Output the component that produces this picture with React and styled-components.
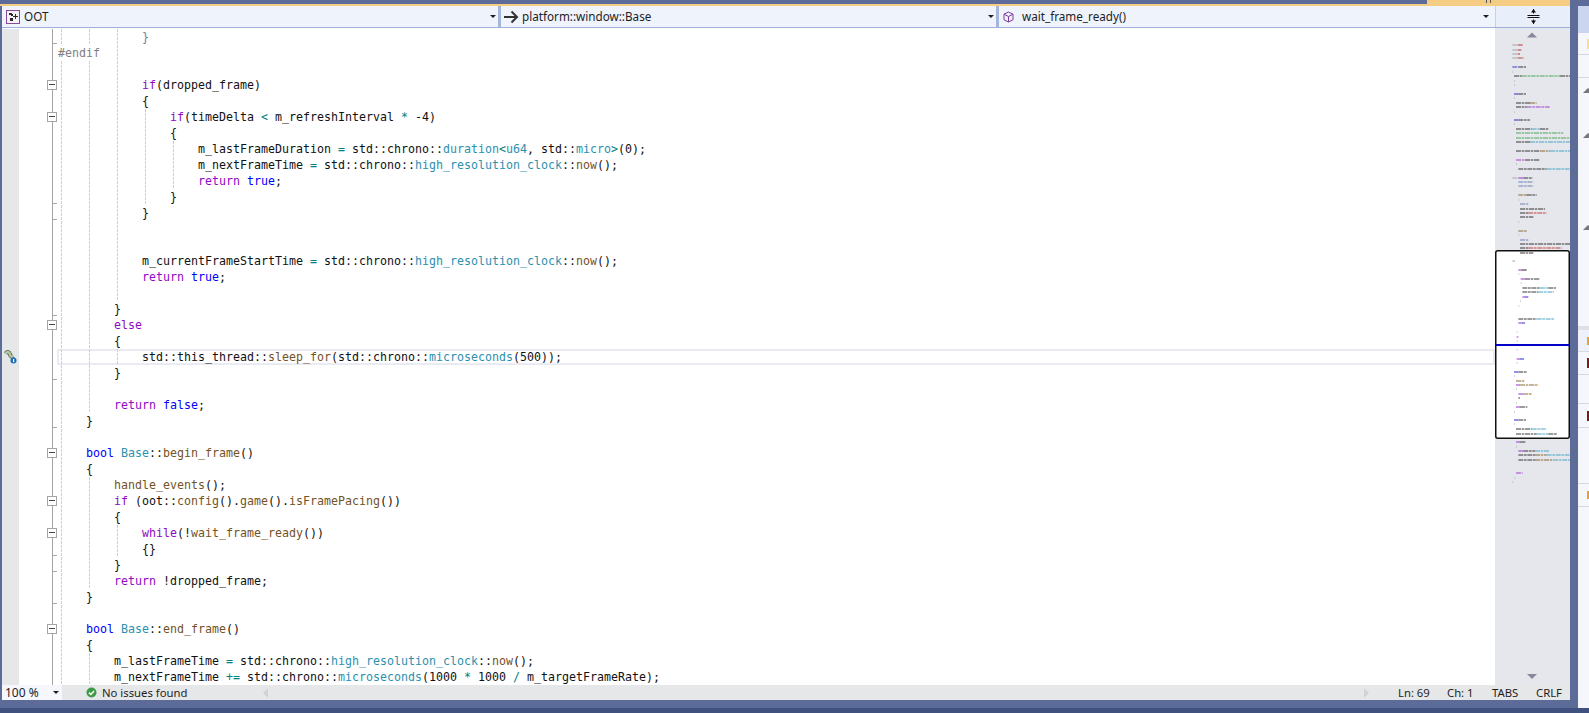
import styled, { createGlobalStyle } from "styled-components";

const GlobalStyle = createGlobalStyle`
  html, body {
    margin: 0;
    padding: 0;
    background: #5d6b99;
    overflow: hidden;
  }
`;

const uiFont = `"Noto Sans", "Open Sans", sans-serif`;

const tokenColors = {
  k: "#0000ff", // keyword
  c: "#8f08c4", // control flow
  f: "#74531f", // function
  t: "#2b91af", // type
  o: "#008080", // operator
  p: "#808080", // preprocessor
  g: "#6d8296", // inactive code
};

// [col, text, guide levels, fold?, closes outline?]
const codeLines = [
  [12, "[g|}]", [0, 1, 2], false, true],
  [0, "[p|#endif]", [2]],
  [0, "", [0, 1, 2]],
  [12, "[c|if](dropped_frame)", [0, 1, 2], true],
  [12, "{", [0, 1, 2]],
  [16, "[c|if](timeDelta [o|<] m_refreshInterval [o|*] -4)", [0, 1, 2, 3], true],
  [16, "{", [0, 1, 2, 3]],
  [20, "m_lastFrameDuration [o|=] std::chrono::[t|duration][o|<][t|u64], std::[t|micro][o|>](0);", [0, 1, 2, 3, 4]],
  [20, "m_nextFrameTime [o|=] std::chrono::[t|high_resolution_clock]::[f|now]();", [0, 1, 2, 3, 4]],
  [20, "[c|return] [k|true];", [0, 1, 2, 3, 4]],
  [16, "}", [0, 1, 2, 3], false, true],
  [12, "}", [0, 1, 2], false, true],
  [0, "", [0, 1, 2]],
  [0, "", [0, 1, 2]],
  [12, "m_currentFrameStartTime [o|=] std::chrono::[t|high_resolution_clock]::[f|now]();", [0, 1, 2]],
  [12, "[c|return] [k|true];", [0, 1, 2]],
  [0, "", [0, 1, 2]],
  [8, "}", [0, 1], false, true],
  [8, "[c|else]", [0, 1], true],
  [8, "{", [0, 1]],
  [12, "std::this_thread::[f|sleep_for](std::chrono::[t|microseconds](500));", [0, 1, 2]],
  [8, "}", [0, 1], false, true],
  [0, "", [0, 1]],
  [8, "[c|return] [k|false];", [0, 1]],
  [4, "}", [0], false, true],
  [0, "", [0]],
  [4, "[k|bool] [t|Base]::[f|begin_frame]()", [0], true],
  [4, "{", [0]],
  [8, "[f|handle_events]();", [0, 1]],
  [8, "[c|if] (oot::[f|config]().[f|game]().[f|isFramePacing]())", [0, 1], true],
  [8, "{", [0, 1]],
  [12, "[c|while](![f|wait_frame_ready]())", [0, 1, 2], true],
  [12, "{}", [0, 1, 2], false, true],
  [8, "}", [0, 1], false, true],
  [8, "[c|return] !dropped_frame;", [0, 1]],
  [4, "}", [0], false, true],
  [0, "", [0]],
  [4, "[k|bool] [t|Base]::[f|end_frame]()", [0], true],
  [4, "{", [0]],
  [8, "m_lastFrameTime [o|=] std::chrono::[t|high_resolution_clock]::[f|now]();", [0, 1]],
  [8, "m_nextFrameTime [o|+=] std::chrono::[t|microseconds](1000 [o|*] 1000 [o|/] m_targetFrameRate);", [0, 1]],
];

const dk = "#333";
const gy = "#a8a8a8";
const bl = "#3a3ad8";
const gr = "#4fa858";
const rd = "#c04040";
const pu = "#a040d0";
const te = "#45a5c5";
const br = "#8a6a30";
const sl = "#7080b0";

// y, then runs of [x0, x1, colour], x read off the zoomed crop
const minimap = [
  [45, [97, 112, gy], [113, 130, rd]],
  [50, [97, 112, gy], [113, 124, rd]],
  [54, [97, 112, gy], [113, 120, rd]],
  [58, [97, 112, gy], [113, 132, rd]],
  [67, [97, 115, bl], [115, 138, dk]],
  [72, [97, 100, gy]],
  [76, [102, 125, dk], [125, 240, gr], [240, 270, dk]],
  [81, [102, 105, gy]],
  [85, [102, 105, gy]],
  [94, [102, 115, bl], [115, 138, dk]],
  [98, [102, 105, gy]],
  [103, [108, 150, dk], [150, 170, br]],
  [107, [108, 140, dk], [140, 210, pu]],
  [112, [102, 105, gy]],
  [120, [102, 115, bl], [115, 150, dk]],
  [124, [102, 105, gy]],
  [129, [108, 155, dk], [155, 180, te], [180, 205, dk]],
  [133, [108, 250, gr]],
  [138, [108, 270, gr]],
  [142, [108, 150, dk], [150, 270, te]],
  [151, [108, 180, dk], [180, 210, br], [210, 270, te]],
  [160, [108, 135, pu], [135, 180, dk]],
  [164, [108, 111, gy]],
  [169, [115, 200, dk], [200, 270, te]],
  [178, [97, 115, gy], [115, 130, pu], [130, 158, dk]],
  [182, [115, 160, sl]],
  [186, [115, 160, sl]],
  [195, [115, 140, br], [140, 170, dk]],
  [200, [115, 118, gy]],
  [204, [120, 145, sl]],
  [209, [120, 195, dk]],
  [213, [120, 145, dk], [145, 200, rd]],
  [217, [120, 160, dk]],
  [222, [115, 118, gy]],
  [231, [115, 140, br]],
  [235, [115, 118, gy]],
  [240, [120, 145, sl]],
  [244, [120, 270, dk]],
  [248, [120, 145, dk], [145, 245, rd]],
  [253, [120, 160, dk]],
  [261, [97, 105, gy]],
  [270, [115, 125, pu], [125, 140, dk]],
  [274, [115, 118, gy]],
  [279, [122, 135, pu], [135, 180, dk]],
  [283, [122, 125, gy]],
  [288, [127, 180, dk], [180, 205, te], [205, 228, dk]],
  [292, [127, 175, dk], [175, 222, te]],
  [297, [127, 135, pu], [135, 145, bl]],
  [301, [120, 123, gy]],
  [306, [115, 118, gy]],
  [319, [115, 170, dk], [170, 222, te]],
  [323, [115, 125, pu], [125, 135, bl]],
  [332, [110, 113, gy]],
  [337, [110, 115, pu]],
  [341, [110, 113, gy]],
  [350, [110, 113, gy]],
  [359, [110, 120, pu], [120, 132, bl]],
  [363, [110, 113, gy]],
  [372, [102, 115, bl], [115, 140, dk]],
  [376, [102, 105, gy]],
  [381, [108, 135, br]],
  [385, [108, 120, pu], [120, 175, br]],
  [389, [108, 111, gy]],
  [394, [115, 130, pu], [130, 155, br]],
  [398, [115, 120, dk]],
  [403, [108, 111, gy]],
  [407, [108, 120, pu], [120, 142, dk]],
  [412, [102, 105, gy]],
  [420, [102, 115, bl], [115, 138, dk]],
  [424, [102, 105, gy]],
  [429, [108, 155, dk], [155, 200, te]],
  [434, [108, 170, dk], [170, 205, te], [205, 230, dk]],
  [442, [108, 120, pu], [120, 138, dk]],
  [447, [108, 111, gy]],
  [451, [115, 130, pu], [130, 165, dk], [165, 207, te]],
  [455, [115, 165, dk], [165, 200, br], [200, 270, te]],
  [460, [115, 165, dk], [165, 220, br], [220, 270, te]],
  [473, [108, 128, pu]],
  [478, [103, 106, gy]],
  [482, [97, 100, gy]],
];

const Page = styled.div`
  width: 1589px;
  height: 713px;
  display: flex;
  flex-direction: column;
  background: #5d6b99;
  overflow: hidden;
`;

const Workspace = styled.div`
  height: 708px;
  display: flex;
  padding-left: 2px;
`;

const EditorPane = styled.div`
  width: 1568px;
  display: flex;
  flex-direction: column;
`;

const TitleStrip = styled.div`
  height: 4px;
  display: flex;
  padding-left: 1425px;
`;

const ActiveTab = styled.div`
  width: 112px;
  background: #f5cc84;
  display: flex;
  gap: 3px;
  padding-left: 59px;
`;

const TabTail = styled.span`
  width: 1px;
  height: 3px;
  background: #555;
`;

const AccentLine = styled.div`
  height: 2px;
  margin-left: -2px;
  background: #f5cc84;
`;

const NavBar = styled.div`
  height: 21px;
  display: flex;
  background: #eff3fc;
  border-bottom: 1px solid #9fb1d8;
  font: 11.7px ${uiFont};
  color: #1e1e1e;
`;

const Combo = styled.div`
  width: ${(p) => p.$w}px;
  display: flex;
  align-items: center;
  gap: ${(p) => p.$gap || 4}px;
  padding-left: ${(p) => p.$pad || 4}px;
  box-sizing: border-box;
  border-right: ${(p) => (p.$last ? "none" : "3px solid #a5b6db")};
`;

const ComboText = styled.span`
  flex: 1;
  line-height: 21px;
`;

const Caret = styled.span`
  width: 0;
  height: 0;
  margin-right: ${(p) => p.$right || 3}px;
  border-left: 3px solid transparent;
  border-right: 3px solid transparent;
  border-top: 3px solid #1e1e1e;
`;

const SplitButton = styled.div`
  flex: 1;
  display: flex;
  align-items: center;
  justify-content: center;
  border-left: 1px solid #c4cfe8;
  background: #e9eefb;
`;

const EditorBody = styled.div`
  height: 657px;
  display: flex;
`;

const CodeView = styled.div`
  width: 1493px;
  height: 657px;
  overflow: hidden;
  background: #fff;
  font: 11.63px/16px "DejaVu Sans Mono", "Liberation Mono", monospace;
  color: #111;
`;

const Lines = styled.div`
  padding-top: 1px;
`;

const Row = styled.div`
  height: 16px;
  display: flex;
`;

const Margin = styled.div`
  width: 17px;
  flex: none;
  background: #e6e7e8;
  display: flex;
  align-items: center;
  justify-content: center;
`;

const Gutter = styled.div`
  width: 28px;
  flex: none;
`;

const FoldCell = styled.div`
  width: 10px;
  flex: none;
  position: relative;
  &::before {
    content: "";
    position: absolute;
    left: 5px;
    top: 0;
    bottom: 0;
    width: 1px;
    background: #a5a5a5;
  }
`;

const FoldEnd = styled.span`
  position: absolute;
  left: 5px;
  top: 14px;
  width: 5px;
  height: 1px;
  background: #a5a5a5;
`;

const FoldBox = styled.span`
  position: absolute;
  left: 0;
  top: 3px;
  width: 8px;
  height: 8px;
  border: 1px solid #a5a5a5;
  background: #fff;
  &::after {
    content: "";
    position: absolute;
    left: 1px;
    top: 3px;
    width: 6px;
    height: 1px;
    background: #444;
  }
`;

const CodeCell = styled.div`
  flex: 1;
  position: relative;
  padding-left: ${(p) => p.$col * 7 + 1}px;
  white-space: pre;
  box-shadow: ${(p) => (p.$current ? "inset 0 0 0 2px #eaeaf2" : "none")};
`;

const Guide = styled.span`
  position: absolute;
  left: ${(p) => p.$level * 28 + 4}px;
  top: 0;
  width: 1px;
  height: 16px;
  background: repeating-linear-gradient(#cfcfcf 0 3px, transparent 3px 4px);
`;

const CodeText = styled.span`
  position: relative;
`;

const Tok = styled.span`
  color: ${(p) => tokenColors[p.$kind]};
`;

const ScrollColumn = styled.div`
  width: 75px;
  height: 657px;
  position: relative;
  background: #e6e7ec;
`;

const MiniSvg = styled.svg`
  display: block;
  width: 75px;
  height: 657px;
`;

const StatusBar = styled.div`
  height: 15px;
  display: flex;
  align-items: center;
  background: #e6e7e8;
  font: 11.3px/15px ${uiFont};
  color: #1e1e1e;
`;

const Zoom = styled.div`
  width: 60px;
  height: 15px;
  display: flex;
  align-items: center;
  justify-content: space-between;
  box-sizing: border-box;
  padding-left: 3px;
  background: #f5f7fd;
  font-size: 12px;
`;

const Issues = styled.div`
  display: flex;
  align-items: center;
  gap: 5px;
  margin-left: 24px;
  width: 177px;
`;

const ScrollArrow = styled.span`
  width: 0;
  height: 0;
  border-top: 5px solid transparent;
  border-bottom: 5px solid transparent;
  border-${(p) => (p.$dir === "left" ? "right" : "left")}: 5px solid #d2d3d6;
`;

const HTrack = styled.div`
  width: ${(p) => p.$w}px;
  display: flex;
  justify-content: space-between;
  margin-right: 29px;
`;

const StatusItem = styled.span`
  width: ${(p) => p.$w}px;
  flex: none;
`;

const SidePanel = styled.div`
  width: 11px;
  margin-left: 8px;
  margin-top: 6px;
  background: #f5f7fd;
  display: flex;
  flex-direction: column;
  overflow: hidden;
`;

const PanelRow = styled.div`
  height: ${(p) => p.$h}px;
  flex: none;
  box-sizing: border-box;
  display: flex;
  align-items: center;
  background: ${(p) => p.$bg || "transparent"};
  border-bottom: ${(p) => (p.$line ? "1px solid #d6d8e4" : "none")};
`;

const PanelMark = styled.span`
  width: 2px;
  height: ${(p) => p.$mh}px;
  margin-left: 9px;
  background: ${(p) => p.$color};
`;

const PanelTriangle = styled.span`
  width: 0;
  height: 0;
  margin-left: 5px;
  border-left: 5px solid transparent;
  border-right: 5px solid transparent;
  border-bottom: 5px solid #77777d;
`;

const BottomStrip = styled.div`
  height: 5px;
  background: #40507f;
`;

function CodeLine({ text }) {
  // "[k|bool] x" -> coloured tokens and plain text
  const parts = [];
  const re = /\[(\w)\|([^\]]*)\]/g;
  let last = 0;
  let m;
  while ((m = re.exec(text))) {
    if (m.index > last) parts.push(text.slice(last, m.index));
    parts.push(
      <Tok key={m.index} $kind={m[1]}>
        {m[2]}
      </Tok>
    );
    last = m.index + m[0].length;
  }
  if (last < text.length) parts.push(text.slice(last));
  return <CodeText>{parts}</CodeText>;
}

function ProjectIcon() {
  return (
    <svg width="14" height="14" viewBox="0 0 14 14">
      <rect x="0.5" y="0.5" width="13" height="13" fill="#f3f0f8" stroke="#8a4a9c" />
      <path d="M3 3h3v1h1v2H5V5H3zM7 6h2V4h1v2h2v1h-2v2H9V7H7zM4 8h3v3H4z" fill="#2a2a2a" />
    </svg>
  );
}

function ArrowIcon() {
  return (
    <svg width="16" height="14" viewBox="0 0 16 14">
      <path d="M1 7h13M8.5 1.5 14 7l-5.5 5.5" fill="none" stroke="#333" strokeWidth="2" />
    </svg>
  );
}

function MethodIcon() {
  return (
    <svg width="11" height="12" viewBox="0 0 11 12">
      <path
        d="M5.5 1 10 3.2v5.6L5.5 11 1 8.8V3.2zM1 3.2l4.5 2.3L10 3.2M5.5 5.5V11"
        fill="#f3ecf9"
        stroke="#7a3e9d"
        strokeWidth="1"
      />
    </svg>
  );
}

function SplitIcon() {
  return (
    <svg width="13" height="15" viewBox="0 0 13 15">
      <path d="M0.5 6.5h12M0.5 8.5h12M6.5 0v4.5M6.5 15v-4.5" stroke="#111" fill="none" />
      <path d="M4 3.5h5L6.5 0zM4 11.5h5L6.5 15z" fill="#111" />
    </svg>
  );
}

function HintIcon() {
  return (
    <svg width="13" height="14" viewBox="0 0 13 14" style={{ overflow: "visible" }}>
      <path d="M1.5 3.5C3.5 1 5.5 2 6 4.5S8 7 9.5 6" fill="none" stroke="#56654f" strokeWidth="4" />
      <path d="M1.5 3.5C3.5 1 5.5 2 6 4.5S8 7 9.5 6" fill="none" stroke="#b6cba6" strokeWidth="2.4" />
      <circle cx="9.5" cy="10.5" r="3" fill="#1c6fb5" />
      <rect x="9" y="9" width="1.2" height="3.2" fill="#fff" />
    </svg>
  );
}

function CheckIcon() {
  return (
    <svg width="11" height="11" viewBox="0 0 11 11">
      <circle cx="5.5" cy="5.5" r="5" fill="#3d9a46" />
      <path d="M3 5.6 4.9 7.5 8 3.9" fill="none" stroke="#fff" strokeWidth="1.5" />
    </svg>
  );
}

function Minimap() {
  return (
    <MiniSvg viewBox="1495 28 75 657">
      <defs>
        <filter id="soft" x="-5%" y="-5%" width="110%" height="110%">
          <feGaussianBlur stdDeviation="0.35" />
        </filter>
      </defs>
      <rect x="1495.75" y="250.75" width="73.5" height="187.5" rx="2" fill="#fff" stroke="#111" strokeWidth="1.5" />
      <rect x="1496" y="344" width="73" height="2" fill="#0000c8" />
      <g filter="url(#soft)">
        {minimap.map(([y, ...runs]) =>
          runs.map(([x0, x1, color]) => (
            <line
              key={`${y}-${x0}`}
              x1={1480 + x0 / 3}
              x2={1480 + x1 / 3}
              y1={y}
              y2={y}
              stroke={color}
              strokeWidth="1.7"
              strokeDasharray="5 0.7 2.6 0.7"
              opacity="0.65"
            />
          ))
        )}
      </g>
      <path d="M1527 37.5h10l-5-5z" fill="#868999" />
      <path d="M1527 674h10l-5 5z" fill="#868999" />
    </MiniSvg>
  );
}

export default function App() {
  return (
    <Page>
      <GlobalStyle />
      <Workspace>
        <EditorPane>
          <TitleStrip>
            <ActiveTab>
              <TabTail />
              <TabTail />
            </ActiveTab>
          </TitleStrip>
          <AccentLine />
          <NavBar>
            <Combo $w={499} $gap={4}>
              <ProjectIcon />
              <ComboText>OOT</ComboText>
              <Caret $right={2} />
            </Combo>
            <Combo $w={498} $pad={2} $gap={3}>
              <ArrowIcon />
              <ComboText>platform::window::Base</ComboText>
              <Caret $right={2} />
            </Combo>
            <Combo $w={496} $last $gap={8}>
              <MethodIcon />
              <ComboText>wait_frame_ready()</ComboText>
              <Caret $right={6} />
            </Combo>
            <SplitButton>
              <SplitIcon />
            </SplitButton>
          </NavBar>
          <EditorBody>
            <CodeView>
              <Lines>
                {codeLines.map(([col, text, guides, fold, closes], i) => (
                  <Row key={i}>
                    <Margin>{i === 20 && <HintIcon />}</Margin>
                    <Gutter />
                    <FoldCell>
                      {closes && <FoldEnd />}
                      {fold && <FoldBox />}
                    </FoldCell>
                    <CodeCell $col={col} $current={i === 20}>
                      {guides.map((level) => (
                        <Guide key={level} $level={level} />
                      ))}
                      <CodeLine text={text} />
                    </CodeCell>
                  </Row>
                ))}
              </Lines>
            </CodeView>
            <ScrollColumn>
              <Minimap />
            </ScrollColumn>
          </EditorBody>
          <StatusBar>
            <Zoom>
              100 %
              <Caret $right={3} />
            </Zoom>
            <Issues>
              <CheckIcon />
              No issues found
            </Issues>
            <HTrack $w={1106}>
              <ScrollArrow $dir="left" />
              <ScrollArrow $dir="right" />
            </HTrack>
            <StatusItem $w={49}>Ln: 69</StatusItem>
            <StatusItem $w={45}>Ch: 1</StatusItem>
            <StatusItem $w={44}>TABS</StatusItem>
            <StatusItem $w={34}>CRLF</StatusItem>
          </StatusBar>
        </EditorPane>
        <SidePanel>
          <PanelRow $h={27} $bg="#ccd5f0" />
          <PanelRow $h={22} $line>
            <PanelMark $color="#f5e08c" $mh={10} />
          </PanelRow>
          <PanelRow $h={23} $line />
          <PanelRow $h={24}>
            <PanelTriangle />
          </PanelRow>
          <PanelRow $h={66}>
            <PanelTriangle />
          </PanelRow>
          <PanelRow $h={118}>
            <PanelTriangle />
          </PanelRow>
          <PanelRow $h={40} />
          <PanelRow $h={4} $bg="#e0e0e4" />
          <PanelRow $h={22} $bg="#eef1fb" $line>
            <PanelMark $color="#e8a030" $mh={8} />
          </PanelRow>
          <PanelRow $h={23} $line>
            <PanelMark $color="#7a1a1a" $mh={10} />
          </PanelRow>
          <PanelRow $h={29} $line />
          <PanelRow $h={24} $line>
            <PanelMark $color="#7a1a1a" $mh={10} />
          </PanelRow>
          <PanelRow $h={56} $line />
          <PanelRow $h={23} $line>
            <PanelMark $color="#e8a030" $mh={8} />
          </PanelRow>
        </SidePanel>
      </Workspace>
      <BottomStrip />
    </Page>
  );
}
